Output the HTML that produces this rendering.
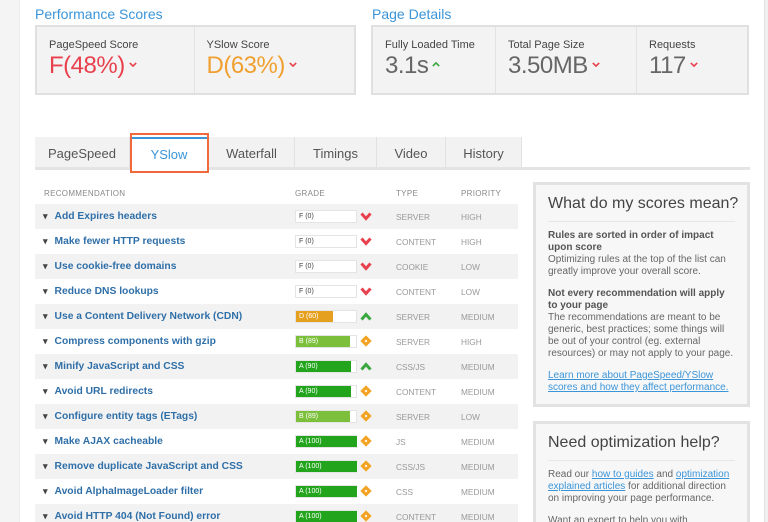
<!DOCTYPE html>
<html style="overflow:hidden"><head><style>
*{margin:0;padding:0;box-sizing:border-box}
html,body{width:768px;height:522px;overflow:hidden}
body{background:#fff;font-family:"Liberation Sans",sans-serif;position:relative}
.strip{position:absolute;left:0;top:0;width:20px;height:522px;background:#f4f4f4;border-right:1px solid #ececec}
.rline{position:absolute;left:764px;top:0;width:4px;height:522px;background:#f0f0f0;border-left:1px solid #e2e2e2}
h2{position:absolute;font-weight:normal;font-size:14px;color:#3b95d9}
.box{position:absolute;top:25px;height:70px;background:#f3f3f3;border:2px solid #e0e0e0;display:flex}
.cell{border-right:1px solid #e2e2e2;padding:12px 0 0 12px;position:relative}
.cell:last-child{border-right:none}
.lab{font-size:11px;color:#444}
.val{font-size:24px;color:#666;margin-top:1px;letter-spacing:-.5px;font-weight:300}
svg.ch{vertical-align:6px;margin-left:4px}
.tabs{position:absolute;left:35px;top:137px;width:715px;height:33px;border-bottom:3px solid #e4e4e4}
.tab{position:absolute;top:0;height:30px;background:#f2f2f2;border-right:1px solid #e2e2e2;font-size:13px;color:#555;text-align:center;line-height:34px}
.th{position:absolute;top:189px;font-size:8px;color:#888;letter-spacing:.3px}
.row{position:absolute;left:35px;width:483px;height:25px}
.row.g{background:#f2f2f2}
.row .n{position:absolute;left:8px;top:7px;color:#2f6fa8;font-weight:bold;font-size:10.3px}
.row .n:before{content:"▾";color:#444;margin-right:7px;font-size:9px}
.gb{position:absolute;left:260px;top:6px;width:62px;height:13px;background:#fff;border:1px solid #e4e4e4;font-size:7px;color:#444;padding:2px 0 0 3px}
.gb i{position:absolute;left:0;top:0;height:11px;font-style:normal;color:#fff;padding:2px 0 0 3px}
.ty{position:absolute;left:361px;top:8px;font-size:8.3px;color:#999}
.pr{position:absolute;left:426px;top:8px;font-size:8.3px;color:#999}
.ic{position:absolute;left:325px;top:8px}
.dia{position:absolute;left:327px;top:8px;width:8px;height:8px;background:#f3a324;transform:rotate(45deg)}
.dia:after{content:"";position:absolute;left:3px;top:3px;width:2px;height:2px;background:#fff}
.pan{position:absolute;left:533px;width:217px;background:#f7f7f7;border:3px solid #e2e2e2;padding:10px 12px;font-size:10px;color:#666;line-height:12px;overflow:hidden}
.pan h3{font-weight:normal;font-size:16px;color:#444;padding-bottom:8px;border-bottom:1px solid #e6e6e6;margin-bottom:8px;line-height:18px;white-space:nowrap}
.pan b{color:#555}
.pan a{color:#3b95d9;text-decoration:underline}
</style></head><body>
<svg width="0" height="0" style="position:absolute"><defs>
<symbol id="dn" viewBox="0 0 10 6"><path d="M1 1L5 5L9 1" fill="none" stroke="#e8414d" stroke-width="2"/></symbol>
<symbol id="up" viewBox="0 0 10 6"><path d="M1 5L5 1L9 5" fill="none" stroke="#3aa840" stroke-width="2"/></symbol>
<symbol id="hdn" viewBox="0 0 12 9"><path d="M1.5 1.5L6 6.5L10.5 1.5" fill="none" stroke="#e8414d" stroke-width="3"/></symbol>
<symbol id="hup" viewBox="0 0 12 9"><path d="M1.5 7.5L6 2.5L10.5 7.5" fill="none" stroke="#3aa840" stroke-width="3"/></symbol>
</defs></svg>
<div class="strip"></div><div class="rline"></div>
<h2 style="left:35px;top:6px">Performance Scores</h2>
<h2 style="left:372px;top:6px">Page Details</h2>
<div class="box" style="left:35px;width:321px">
<div class="cell" style="width:158px"><div class="lab">PageSpeed Score</div><div class="val" style="color:#e8414d"><b>F</b>(48%)<svg class="ch" width="8" height="5"><use href="#dn"/></svg></div></div>
<div class="cell" style="width:160px"><div class="lab">YSlow Score</div><div class="val" style="color:#f0a030"><b>D</b>(63%)<svg class="ch" width="8" height="5"><use href="#dn"/></svg></div></div>
</div>
<div class="box" style="left:371px;width:378px">
<div class="cell" style="width:123px"><div class="lab">Fully Loaded Time</div><div class="val">3.1s<svg class="ch" width="8" height="5"><use href="#up"/></svg></div></div>
<div class="cell" style="width:141px"><div class="lab">Total Page Size</div><div class="val">3.50MB<svg class="ch" width="8" height="5"><use href="#dn"/></svg></div></div>
<div class="cell" style="width:110px"><div class="lab">Requests</div><div class="val">117<svg class="ch" width="8" height="5"><use href="#dn"/></svg></div></div>
</div>
<div class="tabs">
<div class="tab" style="left:0;width:95px">PageSpeed</div>
<div class="tab" style="left:95px;width:79px;background:#fff;color:#3b95d9;border-top:2px solid #3b95d9;height:33px;line-height:32px">YSlow</div>
<div class="tab" style="left:174px;width:86px">Waterfall</div>
<div class="tab" style="left:260px;width:82px">Timings</div>
<div class="tab" style="left:342px;width:69px">Video</div>
<div class="tab" style="left:411px;width:76px">History</div>
</div>
<div style="position:absolute;left:130px;top:133px;width:79px;height:40px;border:2px solid #f06a3c"></div>
<div class="th" style="left:44px">RECOMMENDATION</div>
<div class="th" style="left:295px">GRADE</div>
<div class="th" style="left:396px">TYPE</div>
<div class="th" style="left:461px">PRIORITY</div>

<div class="row g" style="top:204px"><span class="n">Add Expires headers</span><div class="gb">F (0)</div><svg class="ic" width="12" height="9"><use href="#hdn"/></svg><span class="ty">SERVER</span><span class="pr">HIGH</span></div>
<div class="row" style="top:229px"><span class="n">Make fewer HTTP requests</span><div class="gb">F (0)</div><svg class="ic" width="12" height="9"><use href="#hdn"/></svg><span class="ty">CONTENT</span><span class="pr">HIGH</span></div>
<div class="row g" style="top:254px"><span class="n">Use cookie-free domains</span><div class="gb">F (0)</div><svg class="ic" width="12" height="9"><use href="#hdn"/></svg><span class="ty">COOKIE</span><span class="pr">LOW</span></div>
<div class="row" style="top:279px"><span class="n">Reduce DNS lookups</span><div class="gb">F (0)</div><svg class="ic" width="12" height="9"><use href="#hdn"/></svg><span class="ty">CONTENT</span><span class="pr">LOW</span></div>
<div class="row g" style="top:304px"><span class="n">Use a Content Delivery Network (CDN)</span><div class="gb"><i style="width:37px;background:#e6a020">D (60)</i></div><svg class="ic" width="12" height="9"><use href="#hup"/></svg><span class="ty">SERVER</span><span class="pr">MEDIUM</span></div>
<div class="row" style="top:329px"><span class="n">Compress components with gzip</span><div class="gb"><i style="width:54px;background:#7cbf3a">B (89)</i></div><span class="dia"></span><span class="ty">SERVER</span><span class="pr">HIGH</span></div>
<div class="row g" style="top:354px"><span class="n">Minify JavaScript and CSS</span><div class="gb"><i style="width:55px;background:#22a51c">A (90)</i></div><svg class="ic" width="12" height="9"><use href="#hup"/></svg><span class="ty">CSS/JS</span><span class="pr">MEDIUM</span></div>
<div class="row" style="top:379px"><span class="n">Avoid URL redirects</span><div class="gb"><i style="width:55px;background:#22a51c">A (90)</i></div><span class="dia"></span><span class="ty">CONTENT</span><span class="pr">MEDIUM</span></div>
<div class="row g" style="top:404px"><span class="n">Configure entity tags (ETags)</span><div class="gb"><i style="width:54px;background:#7cbf3a">B (89)</i></div><span class="dia"></span><span class="ty">SERVER</span><span class="pr">LOW</span></div>
<div class="row" style="top:429px"><span class="n">Make AJAX cacheable</span><div class="gb"><i style="width:61px;background:#22a51c">A (100)</i></div><span class="dia"></span><span class="ty">JS</span><span class="pr">MEDIUM</span></div>
<div class="row g" style="top:454px"><span class="n">Remove duplicate JavaScript and CSS</span><div class="gb"><i style="width:61px;background:#22a51c">A (100)</i></div><span class="dia"></span><span class="ty">CSS/JS</span><span class="pr">MEDIUM</span></div>
<div class="row" style="top:479px"><span class="n">Avoid AlphaImageLoader filter</span><div class="gb"><i style="width:61px;background:#22a51c">A (100)</i></div><span class="dia"></span><span class="ty">CSS</span><span class="pr">MEDIUM</span></div>
<div class="row g" style="top:504px"><span class="n">Avoid HTTP 404 (Not Found) error</span><div class="gb"><i style="width:61px;background:#22a51c">A (100)</i></div><span class="dia"></span><span class="ty">CONTENT</span><span class="pr">MEDIUM</span></div>

<div class="pan" style="top:182px;height:225px">
<h3>What do my scores mean?</h3>
<p><b>Rules are sorted in order of impact upon score</b><br>Optimizing rules at the top of the list can greatly improve your overall score.</p>
<p style="margin-top:10px"><b>Not every recommendation will apply to your page</b><br>The recommendations are meant to be generic, best practices; some things will be out of your control (eg. external resources) or may not apply to your page.</p>
<p style="margin-top:10px"><a>Learn more about PageSpeed/YSlow scores and how they affect performance.</a></p>
</div>
<div class="pan" style="top:421px;height:110px">
<h3>Need optimization help?</h3>
<p>Read our <a>how to guides</a> and <a>optimization explained articles</a> for additional direction on improving your page performance.</p>
<p style="margin-top:10px">Want an expert to help you with</p>
</div>
</body></html>
